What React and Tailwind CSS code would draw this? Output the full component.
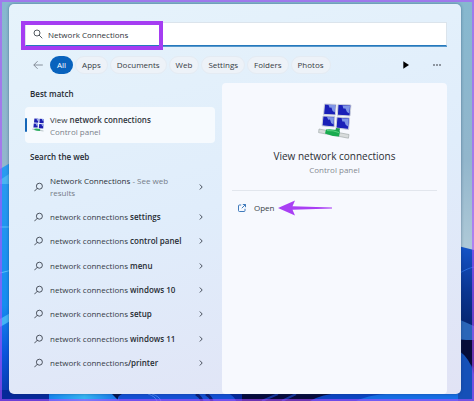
import React from 'react';

const TABS = ['All', 'Apps', 'Documents', 'Web', 'Settings', 'Folders', 'Photos'];

const SUGGESTIONS = [
  { text: 'network connections', bold: ' settings' },
  { text: 'network connections', bold: ' control panel' },
  { text: 'network connections', bold: ' menu' },
  { text: 'network connections', bold: ' windows 10' },
  { text: 'network connections', bold: ' setup' },
  { text: 'network connections', bold: ' windows 11' },
  { text: 'network connections', bold: '/printer' },
];

const Wallpaper = () => (
  <svg
    className="absolute inset-0 w-full h-full"
    viewBox="0 0 474 401"
    preserveAspectRatio="none"
    aria-hidden="true"
  >
    <defs>
      <linearGradient id="sky" x1="0" y1="0" x2="0" y2="1">
        <stop offset="0" stopColor="#86b8cf" />
        <stop offset="0.4" stopColor="#92b6cc" />
        <stop offset="0.63" stopColor="#b0cad8" />
      </linearGradient>
      <linearGradient id="petal" x1="0" y1="0" x2="0" y2="1">
        <stop offset="0" stopColor="#2b9cf0" />
        <stop offset="0.6" stopColor="#168cf0" />
        <stop offset="0.8" stopColor="#0a55dc" />
        <stop offset="1" stopColor="#0636a8" />
      </linearGradient>
      <linearGradient id="petalRight" x1="0" y1="0" x2="0" y2="1">
        <stop offset="0" stopColor="#1554c8" />
        <stop offset="0.3" stopColor="#0a3590" />
        <stop offset="0.55" stopColor="#06246c" />
      </linearGradient>
      <linearGradient id="glow" x1="0" y1="0" x2="1" y2="0">
        <stop offset="0" stopColor="#1684ee" />
        <stop offset="0.5" stopColor="#35b4f2" />
        <stop offset="1" stopColor="#1470e8" />
      </linearGradient>
    </defs>
    <rect width="474" height="401" fill="url(#sky)" />
    <path d="M0 169 L12 162 V401 H0Z" fill="url(#petal)" />
    <path d="M0 180 L12 172 V184 L0 184Z" fill="#4bb4f2" />
    <path d="M0 227 L12 227 M0 273 L12 270" stroke="#5cc0f8" strokeWidth="1" />
    <path d="M0 319 L12 312 V320 L0 327Z" fill="#43b3f6" />
    <rect y="390" width="474" height="11" fill="#06299a" />
    <path d="M49 390 H112 Q119 394 120 401 H49Z" fill="url(#glow)" />
    <path d="M112 393 H228 Q234 396 236 401 H120 Q118 396 112 393Z" fill="#1450d4" />
    <path d="M112 394 H122 Q117 396 118 400Z" fill="#06144e" />
    <path d="M148 394 Q155 396 157 401 M152 394 Q159 396 161 401" fill="none" stroke="#4a86f0" strokeWidth="1" />
    <path d="M196 394 Q201 397 202 401 M206 394 Q211 397 212 401" fill="none" stroke="#0a1f78" strokeWidth="3" />
    <path d="M242 394 H348 L330 401 H242Z" fill="#070b3c" />
    <path d="M262 401 L278 394 M282 401 L296 394" stroke="#17369e" strokeWidth="2" />
    <path d="M310 401 Q322 394 340 393 H474 V401Z" fill="#0c45c2" />
    <path d="M356 401 Q370 394 400 393 H474 V401Z" fill="#166ee4" />
    <path d="M458 246 L474 250 V401 H458Z" fill="url(#petalRight)" />
    <path d="M458 274 Q468 268 474 267" fill="none" stroke="#2a6cdc" strokeWidth="1" />
    <path d="M458 319 L474 326 V341 L458 339Z" fill="#2a66b8" />
    <path d="M458 340 L474 340 V368 L458 350Z" fill="#060c38" />
    <path d="M458 350 Q470 358 474 374 V401 H458Z" fill="#1550b8" />
  </svg>
);

const SearchIcon = ({ className }) => (
  <svg className={className} viewBox="0 0 10 10" fill="none" stroke="currentColor" aria-hidden="true">
    <circle cx="4" cy="4" r="3" strokeWidth="0.9" />
    <path d="M6.2 6.2 L9 9" strokeWidth="0.9" strokeLinecap="round" />
  </svg>
);

// Same glass, handle pointing to the lower left
const WebSearchIcon = () => (
  <svg
    className="w-[10px] h-[10px] shrink-0 text-[#3c434e]"
    viewBox="0 0 10 10"
    fill="none"
    stroke="currentColor"
    aria-hidden="true"
  >
    <circle cx="5.4" cy="4.2" r="3" strokeWidth="0.9" />
    <path d="M3.2 6.4 L0.6 9" strokeWidth="0.9" strokeLinecap="round" />
  </svg>
);

const ChevronIcon = () => (
  <svg
    className="w-[4px] h-[6px] shrink-0 text-[#39414d]"
    viewBox="0 0 4 6"
    fill="none"
    stroke="currentColor"
    aria-hidden="true"
  >
    <path d="M0.8 0.5 L3.2 3 L0.8 5.5" strokeWidth="0.9" />
  </svg>
);

const NetworkIcon = ({ className }) => (
  <svg className={className} viewBox="0 0 34 36" aria-hidden="true">
    <g stroke="#cdd2dc" strokeWidth="1">
      <path d="M6.5 1 L18 1.4 L17.4 12 L5.6 11.4Z" fill="#1a20b8" />
      <path d="M20 1.4 L33 2 L32 13 L19.4 12.2Z" fill="#1a20b8" />
      <path d="M5 13 L16.8 13.4 L16.2 24 L4 22.8Z" fill="#1a20b8" />
      <path d="M19 14 L31.6 15 L30.6 26.4 L18 25Z" fill="#1a20b8" />
    </g>
    <g fill="#7f95e6">
      <path d="M10.5 2 L17.2 2 L16.8 9.5 L14.6 8 L13.4 4.6 L11.6 4.8Z" />
      <path d="M24.5 2.4 L32 2.8 L31.4 10.5 L29 9 L27.4 5.4 L25.4 5.6Z" />
      <path d="M9 14 L16 14.2 L15.6 21.5 L13.2 20 L12 16.6 L10.2 16.8Z" />
      <path d="M23.5 15.2 L30.8 15.8 L30.2 23.6 L27.8 22 L26.4 18.4 L24.4 18.6Z" />
    </g>
    <path d="M1 26 L31 31.5 L30.4 35.2 L0.6 29.6Z" fill="#d8dcdc" stroke="#9ba3a3" strokeWidth="0.6" />
    <path d="M18 25 L22 25.6 L21.4 29 L17 28.4Z" fill="#1e9c4c" />
    <path d="M8 26.6 Q15 25.6 22 28.6 L21 33.4 Q13 33 7 30.4Z" fill="#19ab4f" />
    <path d="M9 27.6 Q15 27 21 29.6" fill="none" stroke="#6bdc8e" strokeWidth="0.8" />
  </svg>
);

// Result-list version, drawn with fewer details
const NetworkIconSmall = () => (
  <svg className="w-[13px] h-[14px] ml-[5px] shrink-0" viewBox="0 0 13 14" aria-hidden="true">
    <g fill="#1c1fb0">
      <path d="M2.4 0.6 L6.4 0.8 L6.2 4.8 L2 4.6Z" />
      <path d="M7.6 0.8 L11.8 1 L11.6 5.2 L7.4 5Z" />
      <path d="M1.8 5.6 L5.8 5.8 L5.6 9.6 L1.4 9.4Z" />
      <path d="M7.2 6 L11.4 6.2 L11.2 10.4 L6.8 10.2Z" />
    </g>
    <g fill="#9db0ee">
      <path d="M4.6 0.7 L6.4 0.8 L6.3 3 L5 2.4Z" />
      <path d="M9.8 0.9 L11.8 1 L11.7 3.2 L10.4 2.6Z" />
      <path d="M4 5.7 L5.8 5.8 L5.7 8 L4.4 7.4Z" />
      <path d="M9.4 6.1 L11.4 6.2 L11.3 8.4 L10 7.8Z" />
    </g>
    <path d="M0.3 10.6 L11.5 12.4 V13.6 L0.3 11.8Z" fill="#bcc6ca" />
    <path d="M2.4 10.8 Q5 9.8 8.2 11.2 L8 13 Q4.6 13 2.4 11.9Z" fill="#2aae5e" />
  </svg>
);

const SearchBox = () => (
  <div className="relative">
    <div className="flex items-center h-6 pl-[7px] gap-[5px] bg-white border border-[#dbe4ec] border-b-[#2579bd] shadow-[0_1px_0_#5798cc]">
      <SearchIcon className="w-[10px] h-[10px] shrink-0 text-[#424850]" />
      <input
        type="text"
        aria-label="Search"
        defaultValue="Network Connections"
        className="flex-1 min-w-0 h-4 bg-transparent text-[8px] text-[#30343a] outline-none"
      />
    </div>
    <div className="absolute -left-1 -top-px w-[142px] h-[29px] border-4 border-[#a53df2] pointer-events-none" />
  </div>
);

const FilterTabs = () => (
  <nav className="flex items-center mt-[10px] pl-2 pr-[6px]">
    <button type="button" aria-label="Back" className="text-[#7b838e]">
      <svg className="w-[10px] h-[10px]" viewBox="0 0 10 10" fill="none" stroke="currentColor">
        <path d="M9.8 5 H0.8 M4.6 1.2 L0.8 5 L4.6 8.8" strokeWidth="0.9" />
      </svg>
    </button>
    <div className="flex gap-[2px] ml-[7px]">
      {TABS.map((tab) => (
        <button
          key={tab}
          type="button"
          className={
            tab === 'All'
              ? 'h-[18px] px-[7px] rounded-full bg-[#0862bd] text-white'
              : 'h-[18px] px-[6px] rounded-full bg-[#edf2f8] border border-[#e4ebf3] text-[#363b43]'
          }
        >
          {tab}
        </button>
      ))}
    </div>
    <button type="button" aria-label="Scroll filters" className="ml-auto text-black">
      <svg className="w-[6px] h-2" viewBox="0 0 6 8" fill="currentColor">
        <path d="M0.3 0.3 L6 4 L0.3 7.7Z" />
      </svg>
    </button>
    <button type="button" aria-label="More" className="ml-6 text-[#22262c]">
      <svg className="w-2 h-2" viewBox="0 0 8 8" fill="currentColor">
        <circle cx="1" cy="4" r="0.8" />
        <circle cx="4" cy="4" r="0.8" />
        <circle cx="7" cy="4" r="0.8" />
      </svg>
    </button>
  </nav>
);

const Results = () => (
  <section className="flex flex-col w-[190px] shrink-0 pb-[19px]">
    <h2 className="pl-[5px] mt-[5px] leading-3 font-semibold text-[#262b32]">Best match</h2>

    <button type="button" className="flex items-center h-9 mt-[7px] bg-[#f6fafe] rounded-sm text-left">
      <span className="w-[2px] h-[14px] rounded-full bg-[#1466b8]" />
      <NetworkIconSmall />
      <span className="ml-[5px]">
        <span className="block leading-3 text-[#30353d]">
          View <b className="font-semibold">network connections</b>
        </span>
        <span className="block leading-[11px] text-[#7a818b]">Control panel</span>
      </span>
    </button>

    <h2 className="pl-[5px] mt-2 leading-3 font-semibold text-[#262b32]">Search the web</h2>

    <button type="button" className="flex items-center h-9 mt-[6px] pl-[9px] pr-3 gap-[6px] text-left">
      <WebSearchIcon />
      <span className="flex-1 pr-4 leading-3 text-[#757d88]">
        <span className="text-[#2b3038]">Network Connections</span> - See web results
      </span>
      <ChevronIcon />
    </button>

    <ul className="flex flex-col flex-1">
      {SUGGESTIONS.map((item) => (
        <li key={item.bold} className="flex flex-1">
          <button type="button" className="flex items-center w-full pl-[9px] pr-3 gap-[6px] text-left text-[#343a44]">
            <WebSearchIcon />
            <span className="flex-1">
              {item.text}
              <b className="font-semibold text-[#262b32]">{item.bold}</b>
            </span>
            <ChevronIcon />
          </button>
        </li>
      ))}
    </ul>
  </section>
);

const Preview = () => (
  <section className="flex flex-col flex-1 min-w-0 px-[10px] bg-[#f7f9fe] rounded">
    <div className="flex flex-col items-center pt-5 pb-[14px] border-b border-[#e2e6ed]">
      <NetworkIcon className="w-[34px] h-9" />
      <h1 className="mt-[9px] text-[10px] leading-4 text-[#2b2e34]">View network connections</h1>
      <p className="leading-3 text-[#858a92]">Control panel</p>
    </div>
    <div className="flex items-center mt-[9px] pl-[6px]">
      <button type="button" className="flex items-center gap-2 h-4 text-[#3a3f47]">
        <svg className="w-2 h-2 text-[#2a6cb4]" viewBox="0 0 8 8" fill="none" stroke="currentColor" aria-hidden="true">
          <path d="M3.2 1 H1.4 Q0.5 1 0.5 1.9 V6.6 Q0.5 7.5 1.4 7.5 H6.1 Q7 7.5 7 6.6 V4.8 M4.8 0.5 H7.5 V3.2 M7.5 0.5 L3.8 4.2" strokeWidth="0.9" />
        </svg>
        Open
      </button>
      {/* Callout arrow */}
      <svg className="w-[55px] h-4 ml-[3px]" viewBox="0 0 55 16" aria-hidden="true">
        <path d="M0 8 L17 0.5 L14.5 6.2 L54 7.4 V8.6 L14.5 9.8 L17 15.5Z" fill="#a93ff4" />
      </svg>
    </div>
  </section>
);

export default function App() {
  return (
    <div className="relative flex min-h-screen pt-1 pb-[7px] pl-[9px] pr-[13px] text-[8px] font-['Open_Sans','Noto_Sans',sans-serif]">
      <Wallpaper />
      <main className="relative flex flex-col flex-1 min-w-0 pt-[18px] pl-4 pr-[14px] rounded-[5px] bg-linear-165 from-[#e6f3fb] via-[#e0edfb] to-[#e1e3f5] shadow-[0_0_3px_rgba(20,50,90,0.5)]">
        <SearchBox />
        <FilterTabs />
        <div className="flex flex-1 gap-[7px] mt-[9px]">
          <Results />
          <Preview />
        </div>
      </main>
      <div className="absolute inset-0 border-2 border-[#b050ff]/60 pointer-events-none" />
    </div>
  );
}
